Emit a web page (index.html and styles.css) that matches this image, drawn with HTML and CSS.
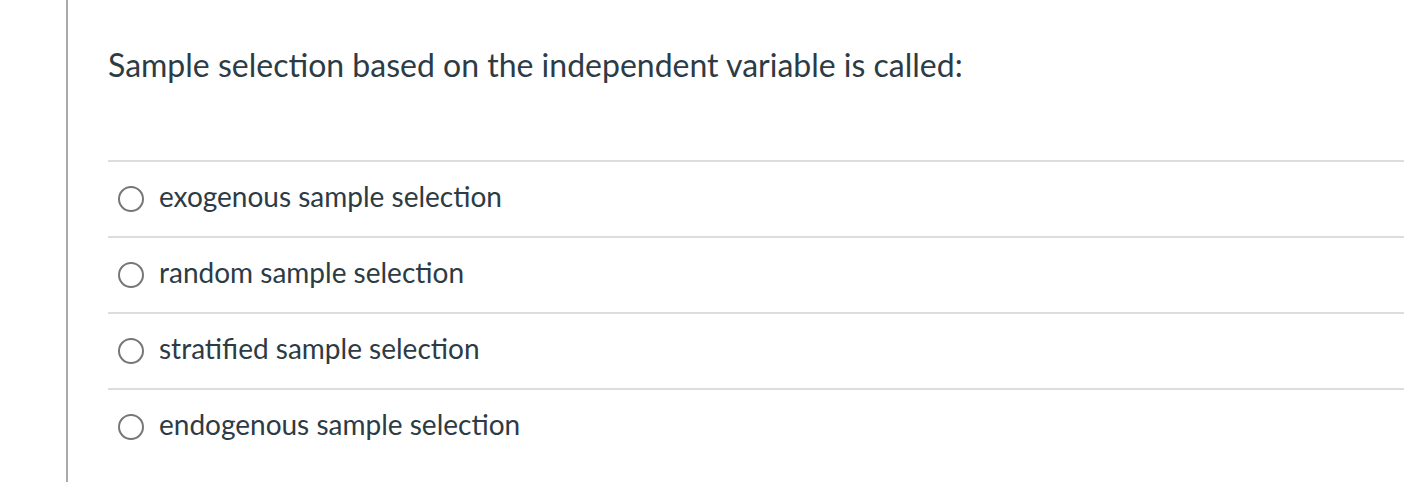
FILE: index.html
```html
<!DOCTYPE html>
<html>
<head>
<meta charset="utf-8">
<link rel="stylesheet" href="styles.css">
</head>
<body>
<div class="page">
  <div class="question">
    <div class="question-text">Sample selection based on the independent variable is called:</div>
    <div class="answers">
      <label class="answer"><span class="radio"></span><span class="answer-text">exogenous sample selection</span></label>
      <label class="answer"><span class="radio"></span><span class="answer-text">random sample selection</span></label>
      <label class="answer"><span class="radio"></span><span class="answer-text">stratified sample selection</span></label>
      <label class="answer"><span class="radio"></span><span class="answer-text">endogenous sample selection</span></label>
    </div>
  </div>
</div>
</body>
</html>
```

FILE: styles.css
```css
html, body {
  margin: 0;
  padding: 0;
  background: #fff;
}
body {
  font-family: Lato, "Open Sans", sans-serif;
  color: #2d3b45;
}
.page {
  height: 482px;
  padding-left: 66px;
  overflow: hidden;
}
.question {
  height: 100%;
  border-left: 2px solid #aaaaaa;
  padding-left: 40px;
}
.question-text {
  font-size: 32px;
  line-height: 40px;
  padding-top: 45px;
  height: 160px;
  box-sizing: border-box;
}
.answers {
  display: flex;
  flex-direction: column;
}
.answer {
  display: flex;
  align-items: center;
  height: 76px;
  border-top: 2px solid #dddddd;
  box-sizing: border-box;
}
.radio {
  width: 22px;
  height: 22px;
  border: 2px solid #777;
  border-radius: 50%;
  margin-left: 10px;
  margin-right: 15px;
  flex: none;
}
.answer-text {
  font-size: 28px;
  line-height: 34px;
  margin-bottom: 6px;
}
```
